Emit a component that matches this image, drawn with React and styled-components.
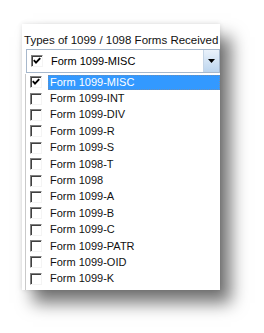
import React from "react"
import styled, { createGlobalStyle } from "styled-components"

const GlobalStyle = createGlobalStyle`
  html, body {
    margin: 0;
    padding: 0;
    background: #ffffff;
  }
  body {
    font-family: "Liberation Sans", Arial, sans-serif;
    color: #000;
  }
`

const Stage = styled.div`
  width: 264px;
  height: 333px;
  padding: 24px 0 0 22px;
  box-sizing: border-box;
  overflow: hidden;
`

const Card = styled.div`
  width: 198px;
  height: 266px;
  background: #fff;
  overflow: hidden;
  box-shadow: 11px 13px 16px rgba(0, 0, 0, 0.55), 0 0 5px rgba(0, 0, 0, 0.12);
  display: flex;
  flex-direction: column;
`

const Title = styled.div`
  margin-top: 9px;
  padding-left: 2px;
  font-size: 11.5px;
  line-height: 15px;
  white-space: nowrap;
  color: #111;
`

const Combo = styled.div`
  margin: 1px 0 0 4px;
  height: 22px;
  border: 1px solid #a7b8cc;
  display: flex;
  align-items: center;
  background: #fff;
`

const ComboValue = styled.div`
  flex: 1;
  display: flex;
  align-items: center;
  padding-left: 4px;
  gap: 8px;
  font-size: 11px;
`

const DropButton = styled.div`
  width: 15px;
  height: 22px;
  border-left: 1px solid #c5d5e6;
  background: linear-gradient(#eaf2fb, #bcd5ee);
  display: flex;
  align-items: center;
  justify-content: center;
`

const List = styled.div`
  margin: 1px 0 0 3px;
  flex: 1;
  border-left: 1px solid #c9c9c9;
  display: flex;
  flex-direction: column;
`

const Row = styled.div`
  height: 16.4px;
  display: flex;
  align-items: center;
  padding-left: 4px;
  flex-shrink: 0;
`

const Label = styled.span`
  font-size: 11px;
  line-height: 15px;
  margin-left: 6px;
  padding: 0 2px;
  flex: ${(p) => (p.$selected ? 1 : "none")};
  background: ${(p) => (p.$selected ? "#3399ff" : "transparent")};
  color: ${(p) => (p.$selected ? "#fff" : "#111")};
  outline: ${(p) => (p.$selected ? "1px dotted #6b8fb8" : "none")};
  outline-offset: -1px;
`

const Box = styled.span`
  width: 12px;
  height: 12px;
  box-sizing: border-box;
  border-top: 1px solid #808080;
  border-left: 1px solid #808080;
  border-right: 1px solid #f4f4f4;
  border-bottom: 1px solid #f4f4f4;
  box-shadow: inset 1px 1px 0 #404040;
  background: #fff;
  display: flex;
  align-items: center;
  justify-content: center;
  flex-shrink: 0;
`

function Check({ checked }) {
  return (
    <Box>
      {checked && (
        <svg width="8" height="8" viewBox="0 0 8 8">
          <path d="M0.8 3.2 L3 5.6 L7.2 1.2" stroke="#000" strokeWidth="1.9" fill="none" />
        </svg>
      )}
    </Box>
  )
}

const forms = [
  "Form 1099-MISC",
  "Form 1099-INT",
  "Form 1099-DIV",
  "Form 1099-R",
  "Form 1099-S",
  "Form 1098-T",
  "Form 1098",
  "Form 1099-A",
  "Form 1099-B",
  "Form 1099-C",
  "Form 1099-PATR",
  "Form 1099-OID",
  "Form 1099-K",
]

export default function App() {
  return (
    <>
      <GlobalStyle />
      <Stage>
        <Card>
          <Title>Types of 1099 / 1098 Forms Received</Title>
          <Combo>
            <ComboValue>
              <Check checked />
              <span>Form 1099-MISC</span>
            </ComboValue>
            <DropButton>
              <svg width="7" height="4" viewBox="0 0 7 4">
                <path d="M0 0 H7 L3.5 4 Z" fill="#000" />
              </svg>
            </DropButton>
          </Combo>
          <List>
            {forms.map((f, i) => (
              <Row key={f}>
                <Check checked={i === 0} />
                <Label $selected={i === 0}>{f}</Label>
              </Row>
            ))}
          </List>
        </Card>
      </Stage>
    </>
  )
}
